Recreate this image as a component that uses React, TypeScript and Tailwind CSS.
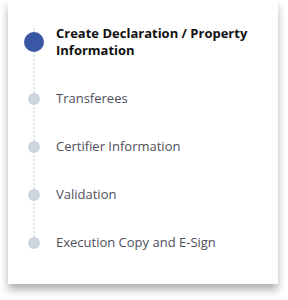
const steps = [
  'Transferees',
  'Certifier Information',
  'Validation',
  'Execution Copy and E-Sign',
];

export default function App() {
  return (
    <div className="h-[300px] w-[288px] bg-white font-['Open_Sans',sans-serif]">
      <div className="ml-2 h-[284px] w-[270px] bg-white pl-4 pt-[25px] shadow-[0_6px_8px_rgba(0,0,0,0.3)]">
        <div className="relative flex flex-col gap-[31px]">
          {/* dotted connector */}
          <div className="absolute left-[9px] top-[3px] h-[212px] border-l-2 border-dotted border-[#dde3ea]" />

          <div className="relative flex items-center gap-3">
            <div className="flex w-5 shrink-0 justify-center">
              <span className="h-5 w-5 rounded-full bg-[#3a57a5]" />
            </div>
            <p className="text-[13px] font-bold leading-[17px] text-[#111]">
              Create Declaration / Property Information
            </p>
          </div>

          {steps.map((label) => (
            <div key={label} className="relative flex items-center gap-3">
              <div className="flex w-5 shrink-0 justify-center">
                <span className="h-3 w-3 rounded-full bg-[#cdd5dd]" />
              </div>
              <p className="text-[13px] leading-[17px] text-[#4e4e5c]">{label}</p>
            </div>
          ))}
        </div>
      </div>
    </div>
  );
}
